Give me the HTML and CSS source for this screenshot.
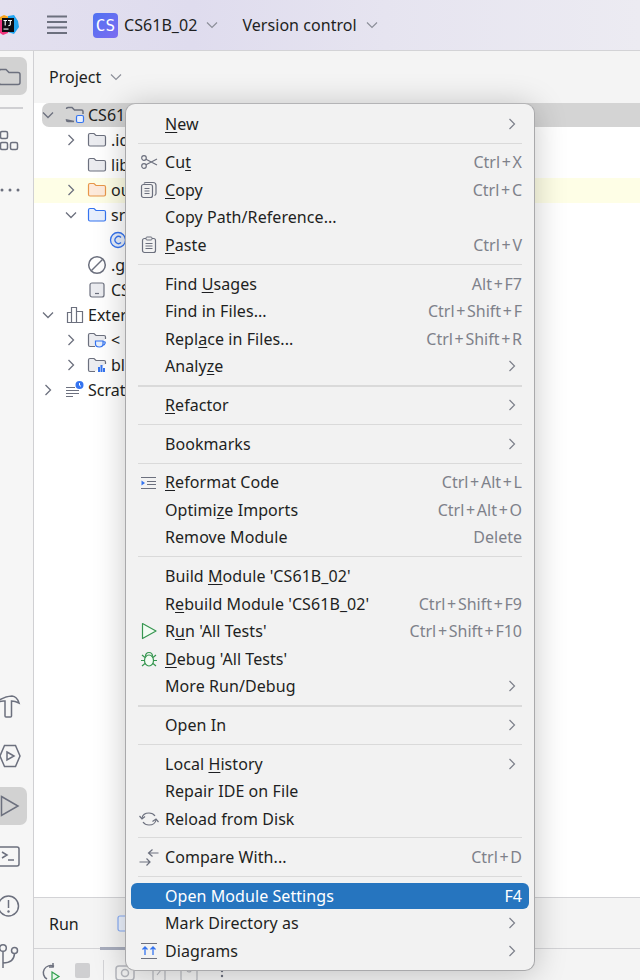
FILE: index.html
```html
<!DOCTYPE html>
<html lang="en">
<head>
<meta charset="utf-8">
<title>CS61B_02</title>
<link rel="stylesheet" href="styles.css">
</head>
<body>
<header class="titlebar">
  <svg class="logo" width="19" height="20" viewBox="0 0 19 20"><path d="M0 2l4-2 5 2-4 8-5 0z" fill="#f7a51f"/><path d="M0 5h8v13l-5 2-3-2z" fill="#f0367e"/><path d="M8 1l6-1 4 6 1 6-5 7-6-2z" fill="#22a5f1"/><rect x="2" y="3" width="12" height="14" fill="#0d0d12"/><path d="M3.500 5.500h3.500M5.200 5.500v5M8 5.500h4M10.300 5.500v4q0 1.200-2 1.200" stroke="#fff" stroke-width="1.100" fill="none"/><rect x="3.500" y="13.500" width="5" height="1.100" fill="#fff"/></svg>
  <svg class="burger" width="20" height="20" viewBox="0 0 20 20"><path d="M0 1.500h20M0 7h20M0 12.500h20M0 18h20" stroke="#6c707e" stroke-width="1.800"/></svg>
  <span class="badge">CS</span>
  <span class="title-text">CS61B_02</span>
  <svg class="chev-down" width="12" height="8" viewBox="0 0 12 8"><path d="M1 1.500l5 5 5-5" class="ico-s"/></svg>
  <span class="title-text vcs">Version control</span>
  <svg class="chev-down" width="12" height="8" viewBox="0 0 12 8"><path d="M1 1.500l5 5 5-5" class="ico-s"/></svg>
</header>
<div class="workspace">
  <nav class="rail">
    <div class="rail-top">
      <div class="rail-btn active"><svg width="24" height="20" viewBox="0 0 24 20"><path d="M2 5.500q0-2 2-2h5l3 3h9q2 0 2 2v8q0 2-2 2H4q-2 0-2-2z" class="ico"/></svg></div>
      <div class="rail-line"></div>
      <div class="rail-btn"><svg width="24" height="24" viewBox="0 0 24 24"><rect x="3.500" y="2.500" width="7" height="7" rx="1.500" class="ico"/><rect x="3.500" y="13.500" width="7" height="7" rx="1.500" class="ico"/><rect x="13.500" y="13.500" width="7" height="7" rx="1.500" class="ico"/></svg></div>
      <div class="rail-btn"><svg width="24" height="6" viewBox="0 0 24 6"><circle cx="5" cy="3" r="1.500" fill="#6c707e"/><circle cx="13" cy="3" r="1.500" fill="#6c707e"/><circle cx="21" cy="3" r="1.500" fill="#6c707e"/></svg></div>
    </div>
    <div class="rail-bottom">
      <div class="rail-btn"><svg width="24" height="24" viewBox="0 0 24 24"><path d="M1 7Q8 2 15 2q5 .5 7 7-4-2-7.500-2v15q0 1-1 1H9q-1 0-1-1V7Q4 6.500 1 8.500z" class="ico"/></svg></div>
      <div class="rail-btn"><svg width="24" height="24" viewBox="0 0 24 24"><path d="M7.500 1.500h11L23 12l-4.500 10.500h-11L3 12z" class="ico"/><path d="M10 8l7 4-7 4z" class="ico"/></svg></div>
      <div class="rail-btn active"><svg width="24" height="26" viewBox="0 0 24 26"><path d="M4.500 3.500L21 13 4.500 22.500z" class="ico"/></svg></div>
      <div class="rail-btn"><svg width="24" height="22" viewBox="0 0 24 22"><rect x="1" y="2" width="21" height="19" rx="2" class="ico"/><path d="M5 7l5 3-5 3M11 15h6" class="ico"/></svg></div>
      <div class="rail-btn"><svg width="24" height="24" viewBox="0 0 24 24"><circle cx="11.500" cy="12" r="10" class="ico"/><path d="M11.500 6v8" class="ico"/><circle cx="11.500" cy="17.500" r="1.200" fill="#6c707e"/></svg></div>
      <div class="rail-btn"><svg width="24" height="26" viewBox="0 0 24 26"><circle cx="6" cy="5" r="3.300" class="ico"/><circle cx="17.500" cy="7.500" r="3" class="ico"/><path d="M6 8.500V25M6 20q11 0 11.500-9.500" class="ico"/></svg></div>
    </div>
  </nav>
  <main class="main">
    <div class="project-head">
      <span class="project-title">Project</span>
      <svg class="chev-down small" width="12" height="8" viewBox="0 0 12 8"><path d="M1 1.500l5 5 5-5" class="ico-s"/></svg>
    </div>
    <ul class="tree">
      <li class="node selected lvl0"><svg class="tw" width="12" height="12" viewBox="0 0 12 12"><path d="M1 3.500l5 5 5-5" class="tree-s"/></svg><svg class="fi" width="20" height="20" viewBox="0 0 20 20"><path d="M1.500 4q0-1.500 1.500-1.500h4l2.500 2.500h7q1.500 0 1.500 1.500V9M9 16.500H3q-1.500 0-1.500-1.500z" class="ico"/><rect x="11.500" y="10.500" width="7" height="7" rx="1.500" fill="#e7effd" stroke="#3574f0" stroke-width="1.200"/></svg><span>CS61B_02</span></li>
      <li class="node lvl1"><svg class="tw" width="12" height="12" viewBox="0 0 12 12"><path d="M3.500 1l5 5-5 5" class="tree-s"/></svg><svg class="fi" width="20" height="20" viewBox="0 0 20 20"><path d="M1.500 5q0-1.500 1.500-1.500h4l2 2h8q1.500 0 1.500 1.500v7.500q0 1.500-1.500 1.500H3q-1.500 0-1.500-1.500z" class="folder"/></svg><span>.idea</span></li>
      <li class="node lvl1 no-tw"><svg class="fi" width="20" height="20" viewBox="0 0 20 20"><path d="M1.500 5q0-1.500 1.500-1.500h4l2 2h8q1.500 0 1.500 1.500v7.500q0 1.500-1.500 1.500H3q-1.500 0-1.500-1.500z" class="folder"/></svg><span>lib</span></li>
      <li class="node lvl1 excluded"><svg class="tw" width="12" height="12" viewBox="0 0 12 12"><path d="M3.500 1l5 5-5 5" class="tree-s"/></svg><svg class="fi" width="20" height="20" viewBox="0 0 20 20"><path d="M1.500 5q0-1.500 1.500-1.500h4l2 2h8q1.500 0 1.500 1.500v7.500q0 1.500-1.500 1.500H3q-1.500 0-1.500-1.500z" class="folder orange"/></svg><span>out</span></li>
      <li class="node lvl1"><svg class="tw" width="12" height="12" viewBox="0 0 12 12"><path d="M1 3.500l5 5 5-5" class="tree-s"/></svg><svg class="fi" width="20" height="20" viewBox="0 0 20 20"><path d="M1.500 5q0-1.500 1.500-1.500h4l2 2h8q1.500 0 1.500 1.500v7.500q0 1.500-1.500 1.500H3q-1.500 0-1.500-1.500z" class="folder blue"/></svg><span>src</span></li>
      <li class="node lvl2"><svg class="fi" width="20" height="20" viewBox="0 0 20 20"><circle cx="9" cy="10" r="7.500" fill="#e7effd" stroke="#3574f0" stroke-width="1.300"/><path d="M12 7.500a3.500 3.500 0 1 0 0 5" fill="none" stroke="#3574f0" stroke-width="1.300"/></svg><span>AllTests</span></li>
      <li class="node lvl1 no-tw"><svg class="fi" width="20" height="20" viewBox="0 0 20 20"><circle cx="10" cy="10" r="8.300" class="ico"/><path d="M4.500 15.500l11-11" class="ico"/></svg><span>.gitignore</span></li>
      <li class="node lvl1 no-tw"><svg class="fi" width="20" height="20" viewBox="0 0 20 20"><rect x="3" y="3" width="14" height="14" rx="2" fill="#ebecf0" stroke="#6c707e" stroke-width="1.200"/><path d="M8 13.500h4" stroke="#6c707e" stroke-width="1.200"/></svg><span>CS61B_02.iml</span></li>
      <li class="node lvl0"><svg class="tw" width="12" height="12" viewBox="0 0 12 12"><path d="M1 3.500l5 5 5-5" class="tree-s"/></svg><svg class="fi" width="20" height="20" viewBox="0 0 20 20"><path d="M2.500 7.500h4v10h-4zM6.500 2.500h5v15h-5zM11.500 6.500h6v11h-6z" class="ico thin"/></svg><span>External Libraries</span></li>
      <li class="node lvl1"><svg class="tw" width="12" height="12" viewBox="0 0 12 12"><path d="M3.500 1l5 5-5 5" class="tree-s"/></svg><svg class="fi" width="20" height="20" viewBox="0 0 20 20"><path d="M8 16.500H3q-1.500 0-1.500-1.500V5q0-1.500 1.500-1.500h4l2 2h8q1.500 0 1.500 1.500v2" class="folder"/><path d="M8.500 11h7.500v3q0 3-3.700 3-3.800 0-3.800-3zM16 11.500q3 0 2 2t-2 1.500" fill="#e7effd" stroke="#3574f0" stroke-width="1.200"/></svg><span>&lt; 17 &gt;</span></li>
      <li class="node lvl1"><svg class="tw" width="12" height="12" viewBox="0 0 12 12"><path d="M3.500 1l5 5-5 5" class="tree-s"/></svg><svg class="fi" width="20" height="20" viewBox="0 0 20 20"><path d="M8 16.500H3q-1.500 0-1.500-1.500V5q0-1.500 1.500-1.500h4l2 2h8q1.500 0 1.500 1.500v2" class="folder"/><path d="M11 12h2v5h-2zM13.500 10h2v7h-2zM16 13h2v4h-2z" fill="#3574f0"/></svg><span>blah</span></li>
      <li class="node lvl0"><svg class="tw" width="12" height="12" viewBox="0 0 12 12"><path d="M3.500 1l5 5-5 5" class="tree-s"/></svg><svg class="fi" width="20" height="20" viewBox="0 0 20 20"><path d="M1 7.500h9M1 10.500h13M1 13.500h13M1 16.500h7" stroke="#6c707e" stroke-width="1.200"/><circle cx="14.500" cy="5" r="4" fill="#3574f0"/><path d="M14.500 3v2.300l1.500 1" stroke="#fff" fill="none"/></svg><span>Scratches and Consoles</span></li>
    </ul>
    <section class="bottom">
      <div class="run-head">
        <span class="run-title">Run</span>
        <svg class="tab-ico" width="16" height="18" viewBox="0 0 16 18"><rect x="1" y="1" width="14" height="15" rx="2" fill="#edf3ff" stroke="#88adf7" stroke-width="1.200"/></svg>
        <span class="tab-line"></span>
      </div>
      <div class="run-tools">
        <svg width="20" height="20" viewBox="0 0 20 20"><path d="M13 4.500A7 7 0 1 0 6 17" class="ico"/><path d="M12 1v4H8" class="ico"/><path d="M11 10l7 4.500-7 4.500z" fill="#e9f7ec" stroke="#2f9e4d" stroke-width="1.200"/></svg>
        <span class="stop"></span>
        <span class="tool-sep"></span>
        <svg width="20" height="20" viewBox="0 0 20 20"><rect x="1" y="4" width="18" height="14" rx="3" class="ico pale"/><circle cx="10" cy="11" r="3.500" class="ico pale"/></svg>
        <svg class="tool-a" width="14" height="20" viewBox="0 0 14 20"><rect x="1" y="1" width="12" height="18" rx="2" class="ico pale thin"/><path d="M5 13l4-5" class="ico pale thin"/></svg>
        <svg class="tool-b" width="18" height="20" viewBox="0 0 18 20"><rect x="1" y="1" width="16" height="18" rx="2" class="ico pale thin"/><circle cx="9" cy="8" r="2" class="ico pale thin"/></svg>
        <svg class="tool-c" width="4" height="14" viewBox="0 0 4 14"><circle cx="2" cy="3" r="1.200" fill="#6c707e"/><circle cx="2" cy="8" r="1.200" fill="#6c707e"/></svg>
      </div>
    </section>
  </main>
</div>

<div class="menu" role="menu">
  <div class="item"><span class="label"><u>N</u>ew</span><svg class="arrow" width="8" height="12" viewBox="0 0 8 12"><path d="M1.500 1l5 5-5 5" class="arrow-s"/></svg></div>
  <hr class="sep tight">
  <div class="item"><svg class="mi" width="18" height="18" viewBox="0 0 18 18"><circle cx="4" cy="5" r="2.300" class="ico thin"/><circle cx="4" cy="13" r="2.300" class="ico thin"/><path d="M6 6.300L17 12M6 11.700L17 6" class="ico thin"/></svg><span class="label">Cu<u>t</u></span><span class="key">Ctrl<span class="p">+</span>X</span></div>
  <div class="item"><svg class="mi" width="18" height="18" viewBox="0 0 18 18"><rect x="1.500" y="3.500" width="11" height="13" rx="2" fill="#f0f0f0" stroke="#6c707e" stroke-width="1.200"/><path d="M4 2.500Q4.500 1.500 6 1.500h7q3 0 3 3v8q0 1.500-1.500 2" class="ico thin"/><path d="M4.500 7.500h5M4.500 10h5M4.500 12.500h5" class="ico thin"/></svg><span class="label"><u>C</u>opy</span><span class="key">Ctrl<span class="p">+</span>C</span></div>
  <div class="item"><span class="label">Copy Path/Reference...</span></div>
  <div class="item"><svg class="mi" width="18" height="18" viewBox="0 0 18 18"><rect x="2.500" y="2.500" width="13" height="14" rx="2" class="ico thin"/><rect x="6" y="1" width="6" height="3" rx="1" fill="#f0f0f0" stroke="#6c707e"/><path d="M5.500 7.500h7M5.500 10h7M5.500 12.500h7" class="ico thin"/></svg><span class="label"><u>P</u>aste</span><span class="key">Ctrl<span class="p">+</span>V</span></div>
  <hr class="sep wide">
  <div class="item"><span class="label">Find <u>U</u>sages</span><span class="key">Alt<span class="p">+</span>F7</span></div>
  <div class="item"><span class="label">Find in Files...</span><span class="key">Ctrl<span class="p">+</span>Shift<span class="p">+</span>F</span></div>
  <div class="item"><span class="label">Repl<u>a</u>ce in Files...</span><span class="key">Ctrl<span class="p">+</span>Shift<span class="p">+</span>R</span></div>
  <div class="item"><span class="label">Analy<u>z</u>e</span><svg class="arrow" width="8" height="12" viewBox="0 0 8 12"><path d="M1.500 1l5 5-5 5" class="arrow-s"/></svg></div>
  <hr class="sep strong">
  <div class="item"><span class="label"><u>R</u>efactor</span><svg class="arrow" width="8" height="12" viewBox="0 0 8 12"><path d="M1.500 1l5 5-5 5" class="arrow-s"/></svg></div>
  <hr class="sep">
  <div class="item"><span class="label">Bookmarks</span><svg class="arrow" width="8" height="12" viewBox="0 0 8 12"><path d="M1.500 1l5 5-5 5" class="arrow-s"/></svg></div>
  <hr class="sep">
  <div class="item"><svg class="mi" width="18" height="18" viewBox="0 0 18 18"><path d="M1 3.500h15M7 7.500h9M7 10.500h9M1 14.500h15" stroke="#6c707e" stroke-width="1.200"/><path d="M1.500 6.500l3.500 2.500-3.500 2.500z" fill="#3574f0"/></svg><span class="label"><u>R</u>eformat Code</span><span class="key">Ctrl<span class="p">+</span>Alt<span class="p">+</span>L</span></div>
  <div class="item"><span class="label">Optimi<u>z</u>e Imports</span><span class="key">Ctrl<span class="p">+</span>Alt<span class="p">+</span>O</span></div>
  <div class="item"><span class="label">Remove Module</span><span class="key">Delete</span></div>
  <hr class="sep">
  <div class="item"><span class="label">Build <u>M</u>odule 'CS61B_02'</span></div>
  <div class="item"><span class="label">R<u>e</u>build Module 'CS61B_02'</span><span class="key">Ctrl<span class="p">+</span>Shift<span class="p">+</span>F9</span></div>
  <div class="item"><svg class="mi" width="18" height="18" viewBox="0 0 18 18"><path d="M2.500 1.500l13.500 7.500-13.500 7.500z" fill="#f2fcf3" stroke="#369650" stroke-width="1.200" stroke-linejoin="round"/></svg><span class="label">R<u>u</u>n 'All Tests'</span><span class="key">Ctrl<span class="p">+</span>Shift<span class="p">+</span>F10</span></div>
  <div class="item"><svg class="mi" width="18" height="18" viewBox="0 0 18 18"><ellipse cx="9" cy="10.500" rx="4.500" ry="5.500" fill="#f2fcf3" stroke="#369650" stroke-width="1.200"/><path d="M5.500 6.500q0-4 3.500-4t3.500 4M1 10.500h3.500M13.500 10.500H17M2 5l3 2.500M16 5l-3 2.500M2 16l3-2.500M16 16l-3-2.500" fill="none" stroke="#369650" stroke-width="1.200"/></svg><span class="label"><u>D</u>ebug 'All Tests'</span></div>
  <div class="item"><span class="label">More Run/Debug</span><svg class="arrow" width="8" height="12" viewBox="0 0 8 12"><path d="M1.500 1l5 5-5 5" class="arrow-s"/></svg></div>
  <hr class="sep strong">
  <div class="item"><span class="label">Open In</span><svg class="arrow" width="8" height="12" viewBox="0 0 8 12"><path d="M1.500 1l5 5-5 5" class="arrow-s"/></svg></div>
  <hr class="sep">
  <div class="item"><span class="label">Local <u>H</u>istory</span><svg class="arrow" width="8" height="12" viewBox="0 0 8 12"><path d="M1.500 1l5 5-5 5" class="arrow-s"/></svg></div>
  <div class="item"><span class="label">Repair IDE on File</span></div>
  <div class="item"><svg class="mi wide" width="20" height="18" viewBox="0 0 20 18"><path d="M3 8q1-5 7-5 4 0 6 3M17 10q-1 5-7 5-4 0-6-3" class="ico thin"/><path d="M0.500 6L3 9l3-2.500M13.500 11.500L17 9l2.500 3" class="ico thin"/></svg><span class="label">Reload from Disk</span></div>
  <hr class="sep">
  <div class="item"><svg class="mi wide" width="20" height="18" viewBox="0 0 20 18"><path d="M19.500 5H9.500M13.500 1.500L9.500 5l4 3.500M.5 14H11M7.500 10.500L11 14l-3.500 3.500" class="ico thin"/></svg><span class="label">Compare With...</span><span class="key">Ctrl<span class="p">+</span>D</span></div>
  <hr class="sep before-hot">
  <div class="item hot"><span class="label">Open Module Settings</span><span class="key">F4</span></div>
  <div class="item"><span class="label">Mark Directory as</span><svg class="arrow" width="8" height="12" viewBox="0 0 8 12"><path d="M1.500 1l5 5-5 5" class="arrow-s"/></svg></div>
  <div class="item"><svg class="mi" width="18" height="18" viewBox="0 0 18 18"><path d="M1 1.500h16M1 16.500h16" stroke="#6c707e" stroke-width="1.200"/><path d="M5 13V5M2.500 7.500L5 5l2.500 2.500M13 13V5M10.500 7.500L13 5l2.500 2.500" fill="none" stroke="#3574f0" stroke-width="1.300"/></svg><span class="label">Diagrams</span><svg class="arrow" width="8" height="12" viewBox="0 0 8 12"><path d="M1.500 1l5 5-5 5" class="arrow-s"/></svg></div>
</div>
</body>
</html>
```

FILE: styles.css
```css
* { box-sizing: border-box; }
html, body { margin: 0; height: 100%; }
body {
  width: 640px;
  height: 980px;
  overflow: hidden;
  position: relative;
  display: flex;
  flex-direction: column;
  font-family: "Noto Sans", "Open Sans", sans-serif;
  font-size: 16px;
  color: #1e1f22;
  background: #fff;
}
.ico { fill: none; stroke: #6c707e; stroke-width: 1.500; }
.ico.thin { stroke-width: 1.200; }
.ico.pale { stroke: #b5b7bd; }
.ico-s { fill: none; stroke: #8c8f99; stroke-width: 1.200; }
.tree-s { fill: none; stroke: #6c707e; stroke-width: 1.300; }
.arrow-s { fill: none; stroke: #7d808b; stroke-width: 1.200; }

.titlebar {
  height: 51px;
  flex: none;
  display: flex;
  align-items: center;
  background: linear-gradient(90deg, #e3e0ef 0%, #dfdcee 30%, #e6e4f0 60%, #ecebf2 100%);
  border-bottom: 1px solid #d3d3d6;
}
.logo { flex: none; }
.burger { margin-left: 28px; flex: none; }
.badge {
  margin-left: 26px;
  width: 25px;
  height: 25px;
  border-radius: 4px;
  background: linear-gradient(135deg, #4f72f2, #7d6cf0);
  color: #fff;
  font-size: 16px;
  font-family: "DejaVu Sans Mono", monospace;
  display: flex;
  align-items: center;
  justify-content: center;
}
.title-text { margin-left: 6px; font-size: 16px; letter-spacing: 0.05px; }
.title-text.vcs { margin-left: 24px; }
.chev-down { margin-left: 9px; flex: none; }

.workspace { flex: 1; display: flex; min-height: 0; }
.rail {
  width: 34px;
  flex: none;
  border-right: 1px solid #d0d0d3;
  background: #f6f6f6;
  display: flex;
  flex-direction: column;
  justify-content: space-between;
  padding-top: 6px;
  padding-bottom: 5px;
  overflow: hidden;
}
.rail-top, .rail-bottom { display: flex; flex-direction: column; }
.rail-bottom { gap: 12px; }
.rail-btn {
  width: 36px;
  height: 38px;
  margin-left: -9px;
  border-radius: 7px;
  display: flex;
  align-items: center;
  justify-content: center;
  flex: none;
}
.rail-btn.active { background: #d2d2d2; }
.rail-line { height: 2px; background: #d0d0d3; margin: 12px 10px 13px 0; }
.rail-top .rail-btn + .rail-btn { margin-top: 11px; }

.main { flex: 1; display: flex; flex-direction: column; min-width: 0; position: relative; }
.project-head {
  height: 52px;
  flex: none;
  background: #f4f4f4;
  display: flex;
  align-items: center;
  padding-left: 15px;
}
.tree { list-style: none; margin: 0; padding: 0; flex: 1; background: #fff; }
.node { height: 25px; padding-bottom: 1px; display: flex; align-items: center; white-space: nowrap; }
.node.selected { background: #d4d4d4; margin-left: 8px; border-radius: 7px 0 0 7px; height: 24px; margin-bottom: 1px; padding-left: 0; }
.node.lvl0 { padding-left: 8px; }
.node.selected.lvl0 { padding-left: 0; }
.node.lvl1 { padding-left: 31px; }
.node.lvl1.no-tw { padding-left: 53px; }
.node.lvl2 { padding-left: 75px; }
.node.excluded { background: #fefee6; }
.tw { flex: none; margin-right: 11px; }
.lvl1 .tw { margin-right: 10px; }
.fi { flex: none; margin-right: 3px; }
.lvl1 .fi { margin-right: 4px; }
.folder { fill: #ebecf0; stroke: #6c707e; stroke-width: 1.200; }
.folder.orange { fill: #fdeadb; stroke: #e8974a; }
.folder.blue { fill: #e7effd; stroke: #3574f0; }

.bottom { flex: none; background: #f4f4f4; }
.run-head {
  height: 52px;
  padding-top: 2px;
  border-top: 1px solid #d3d3d6;
  border-bottom: 1px solid #d3d3d6;
  display: flex;
  align-items: center;
  padding-left: 15px;
  position: relative;
}
.tab-ico { margin-left: 38px; }
.tab-line { position: absolute; left: 66px; bottom: -2px; width: 30px; height: 3px; background: #a8adbd; }
.run-tools { height: 31px; display: flex; align-items: flex-start; padding: 13px 0 0 7px; overflow: hidden; }
.stop { width: 15px; height: 15px; background: #cfcfd1; border-radius: 2px; margin-left: 14px; margin-top: 1px; }
.tool-sep { width: 1px; height: 22px; background: #d3d3d6; margin: -2px 11px 0 13px; }
.tool-a { margin-left: 17px; }
.tool-b { margin-left: 14px; }
.tool-c { margin-left: 22px; margin-top: 6px; }

.menu {
  position: absolute;
  left: 125px;
  top: 103px;
  width: 410px;
  height: 868px;
  background: #f2f2f2;
  border: 1px solid #a9a9ab;
  border-top-color: #b4b4b6;
  border-radius: 10px;
  box-shadow: 0 3px 32px rgba(0, 0, 0, 0.22);
  padding: 6.300px 5px;
  font-size: 16px;
  letter-spacing: 0.07px;
}
.item {
  height: 27.500px;
  display: flex;
  align-items: center;
  position: relative;
  padding: 0 7px 0 34px;
  border-radius: 6px;
  white-space: nowrap;
}
.item .label { flex: 1; }
.item u { text-underline-offset: 2px; text-decoration-thickness: 1px; }
.item .key { color: #7e818a; letter-spacing: 0; }
.item .p { margin: 0 1.700px; }
.item .arrow { flex: none; margin-right: 6px; }
.item .mi { position: absolute; left: 9px; top: 5px; }
.item .mi.wide { left: 8px; }
.item.hot { background: #2675bf; color: #fff; height: 25.500px; margin: 1px 0; }
.item.hot .key { color: #fff; }
.sep {
  height: 1px;
  margin: 5.100px 7px;
  border: 0;
  background: #dadada;
}
.sep.tight { margin-bottom: 4.600px; }
.sep.wide { margin-bottom: 5.600px; }
.sep.before-hot { margin-bottom: 6.000px; }
.sep.strong { height: 2px; margin: 4.600px 7px; }
```
